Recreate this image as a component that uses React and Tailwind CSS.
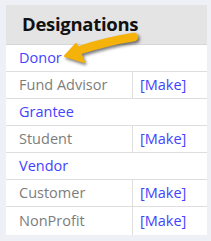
import React from "react";

const rows = [
  { name: "Donor", link: true },
  { name: "Fund Advisor", make: true },
  { name: "Grantee", link: true },
  { name: "Student", make: true },
  { name: "Vendor", link: true },
  { name: "Customer", make: true },
  { name: "NonProfit", make: true },
];

export default function App() {
  return (
    <div className="w-[211px] h-[241px] bg-[#eff0f5] pt-[5px] pl-[6px] relative" style={{ fontFamily: '"Open Sans", "Noto Sans", sans-serif' }}>
      <div className="w-[201px] bg-white">
        <div className="h-[40px] bg-[#e4e4e4] border-b border-[#d6d6d6] pl-[16px] flex items-center">
          <span className="text-[18.5px] font-bold text-[#111] leading-none tracking-[-0.3px]">Designations</span>
        </div>
        {rows.map((r, i) => (
          <div key={r.name} className={`flex h-[27px] ${i < rows.length - 1 ? "border-b border-[#dedede]" : "h-[28px]"}`}>
            <div className={`flex items-center pl-[13px] ${r.make ? "w-[127px] border-r border-[#dedede]" : "flex-1"}`}>
              <span className={`text-[14.5px] leading-none ${r.link ? "text-[#4343ff]" : "text-[#7d7d7d]"}`}>{r.name}</span>
            </div>
            {r.make && (
              <div className="flex-1 flex items-center pl-[7px]">
                <span className="text-[14.5px] leading-none text-[#4343ff]">[Make]</span>
              </div>
            )}
          </div>
        ))}
      </div>
      <svg className="absolute left-0 top-0 pointer-events-none" width="211" height="241" viewBox="0 0 211 241">
        <defs>
          <filter id="sh" x="-20%" y="-40%" width="140%" height="180%">
            <feGaussianBlur stdDeviation="1.6" />
          </filter>
        </defs>
        <g transform="translate(1.5,2)" filter="url(#sh)" opacity="0.6">
          <path d="M134 37 Q108 41 80 50" stroke="#222" strokeWidth="9" strokeLinecap="round" fill="none" />
          <path d="M65 56 L76 44 L84 62 Z" fill="#222" stroke="#222" strokeWidth="2" strokeLinejoin="round" />
        </g>
        <path d="M134 37 Q108 41 80 50" stroke="#f5b20a" strokeWidth="8.5" strokeLinecap="round" fill="none" />
        <path d="M65 56 L76 44 L84 62 Z" fill="#f5b20a" stroke="#f5b20a" strokeWidth="2" strokeLinejoin="round" />
      </svg>
    </div>
  );
}
